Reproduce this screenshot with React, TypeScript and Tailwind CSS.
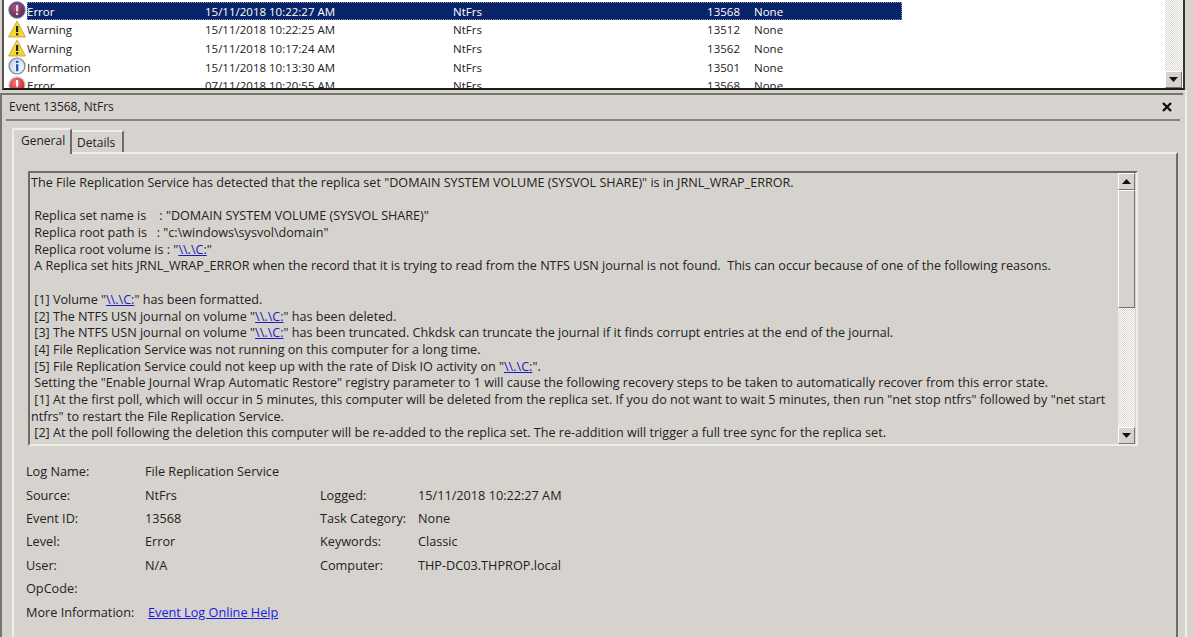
const font = "[font-family:'Open_Sans','Noto_Sans',sans-serif]";

function ErrorIcon({ selected, id }: { selected?: boolean; id: string }) {
  return (
    <svg width="18" height="18" viewBox="0 0 18 18" className="shrink-0">
      <defs>
        <radialGradient id={id} cx="0.4" cy="0.35" r="0.75">
          <stop offset="0" stopColor={selected ? "#a0587c" : "#f37a78"} />
          <stop offset="1" stopColor={selected ? "#621f4d" : "#c4161c"} />
        </radialGradient>
      </defs>
      <circle cx="9" cy="9" r="8" fill={`url(#${id})`} stroke={selected ? "#5c6c9c" : "#c9c9c9"} strokeWidth="1.3" />
      <rect x="8" y="4" width="2.2" height="6.5" fill={selected ? "#e6d6e0" : "#fff"} />
      <rect x="8" y="11.8" width="2.2" height="2.2" fill={selected ? "#e6d6e0" : "#fff"} />
    </svg>
  );
}

function WarnIcon() {
  return (
    <svg width="18" height="18" viewBox="0 0 18 18" className="shrink-0">
      <path d="M9 1 L17.5 17 L0.5 17 Z" fill="#f6d535" stroke="#bfa02c" strokeWidth="0.8" strokeLinejoin="round" />
      <rect x="8" y="6" width="2.2" height="6" fill="#222" />
      <rect x="8" y="13.2" width="2.2" height="2.2" fill="#222" />
    </svg>
  );
}

function InfoIcon() {
  return (
    <svg width="18" height="18" viewBox="0 0 18 18" className="shrink-0">
      <defs>
        <radialGradient id="info-fill" cx="0.6" cy="0.6" r="0.7">
          <stop offset="0" stopColor="#ffffff" />
          <stop offset="1" stopColor="#b9c9ea" />
        </radialGradient>
      </defs>
      <circle cx="9" cy="9" r="8" fill="url(#info-fill)" stroke="#73829f" strokeWidth="1.2" />
      <rect x="8" y="3.8" width="2.4" height="2.2" fill="#2a55b5" />
      <rect x="8" y="7.2" width="2.4" height="7" fill="#2a55b5" />
    </svg>
  );
}

function Arrow({ up }: { up?: boolean }) {
  return (
    <svg width="9" height="5" viewBox="0 0 9 5">
      <path d={up ? "M4.5 0 L9 5 L0 5 Z" : "M0 0 L9 0 L4.5 5 Z"} fill="#111" />
    </svg>
  );
}

function ScrollButton({ up }: { up?: boolean }) {
  return (
    <div className="flex h-[17px] w-[17px] shrink-0 items-center justify-center border-t border-l border-t-white border-l-white border-r border-b border-r-[#77746e] border-b-[#77746e] bg-[#d6d3ce]">
      <Arrow up={up} />
    </div>
  );
}

const dither = "bg-[repeating-conic-gradient(#ffffff_0_25%,#d9d6d0_0_50%)] bg-[length:2px_2px]";

const rows = [
  { icon: <ErrorIcon selected id="err-a" />, level: "Error", date: "15/11/2018 10:22:27 AM", id: "13568", selected: true },
  { icon: <WarnIcon />, level: "Warning", date: "15/11/2018 10:22:25 AM", id: "13512" },
  { icon: <WarnIcon />, level: "Warning", date: "15/11/2018 10:17:24 AM", id: "13562" },
  { icon: <InfoIcon />, level: "Information", date: "15/11/2018 10:13:30 AM", id: "13501" },
  { icon: <ErrorIcon id="err-b" />, level: "Error", date: "07/11/2018 10:20:55 AM", id: "13568" },
];

function EventList() {
  return (
    <div className="ml-[2px] mr-[8px] flex h-[90px] shrink-0 overflow-hidden border-x-2 border-b-2 border-l-[#55534f] border-r-[#333] border-b-[#1c1c1c] bg-white">
      <div className="flex-1 overflow-hidden pt-[2px]">
        {rows.map((r, i) => (
          <div key={i} className="flex h-[18.7px] items-center pl-[4px]">
            <span className="relative top-[-1px]">{r.icon}</span>
            <div
              className={`ml-[1px] flex h-[18px] w-[875px] items-center ${
                r.selected ? "bg-[#0a246a] text-white outline-1 outline-dotted outline-offset-[-1px] outline-[#8f9bbd]" : "text-[#222]"
              }`}
            >
              <span className="w-[178px]">{r.level}</span>
              <span className="w-[248px]">{r.date}</span>
              <span className="w-[248px]">NtFrs</span>
              <span className="w-[39px] text-right">{r.id}</span>
              <span className="ml-[14px]">None</span>
            </div>
          </div>
        ))}
      </div>
      <div className="flex w-[18px] shrink-0 flex-col">
        <div className={`flex-1 ${dither}`} />
        <ScrollButton />
      </div>
    </div>
  );
}

function Link({ children }: { children: string }) {
  return <span className="text-[#1a1ab8] underline">{children}</span>;
}

const C = <Link>{"\\\\.\\C:"}</Link>;

function Message() {
  const lines: React.ReactNode[] = [
    'The File Replication Service has detected that the replica set "DOMAIN SYSTEM VOLUME (SYSVOL SHARE)" is in JRNL_WRAP_ERROR.',
    "",
    ' Replica set name is    : "DOMAIN SYSTEM VOLUME (SYSVOL SHARE)"',
    ' Replica root path is   : "c:\\windows\\sysvol\\domain"',
    <> Replica root volume is : "{C}"</>,
    " A Replica set hits JRNL_WRAP_ERROR when the record that it is trying to read from the NTFS USN journal is not found.  This can occur because of one of the following reasons.",
    "",
    <> [1] Volume "{C}" has been formatted.</>,
    <> [2] The NTFS USN journal on volume "{C}" has been deleted.</>,
    <> [3] The NTFS USN journal on volume "{C}" has been truncated. Chkdsk can truncate the journal if it finds corrupt entries at the end of the journal.</>,
    " [4] File Replication Service was not running on this computer for a long time.",
    <> [5] File Replication Service could not keep up with the rate of Disk IO activity on "{C}".</>,
    ' Setting the "Enable Journal Wrap Automatic Restore" registry parameter to 1 will cause the following recovery steps to be taken to automatically recover from this error state.',
    ' [1] At the first poll, which will occur in 5 minutes, this computer will be deleted from the replica set. If you do not want to wait 5 minutes, then run "net stop ntfrs" followed by "net start',
    'ntfrs" to restart the File Replication Service.',
    " [2] At the poll following the deletion this computer will be re-added to the replica set. The re-addition will trigger a full tree sync for the replica set.",
  ];
  return (
    <div className="ml-[14px] flex h-[275px] w-[1110px] border-y-2 border-x-2 border-t-[#6e6c68] border-l-[#6e6c68] border-r-[#efedea] border-b-[#efedea]">
      <div className="flex-1 overflow-hidden pl-[1px] pt-[2px] text-[12.6px] text-[#222]">
        {lines.map((line, i) => (
          <div key={i} className="h-[16.7px] whitespace-pre leading-[16.7px]">
            {line}
          </div>
        ))}
      </div>
      <div className="mr-[1px] flex w-[17px] shrink-0 flex-col">
        <ScrollButton up />
        <div className="h-[118px] shrink-0 border-y border-x border-t-white border-l-white border-r-[#77746e] border-b-[#77746e] bg-[#d6d3ce]" />
        <div className={`flex-1 ${dither}`} />
        <ScrollButton />
      </div>
    </div>
  );
}

function Details() {
  return (
    <div className="ml-[12px] mt-[14px] grid auto-rows-[23.4px] grid-cols-[119px_175px_98px_1fr] items-center text-[12.7px] text-[#222]">
      <span>Log Name:</span>
      <span className="col-span-3">File Replication Service</span>
      <span>Source:</span>
      <span>NtFrs</span>
      <span>Logged:</span>
      <span>15/11/2018 10:22:27 AM</span>
      <span>Event ID:</span>
      <span>13568</span>
      <span>Task Category:</span>
      <span>None</span>
      <span>Level:</span>
      <span>Error</span>
      <span>Keywords:</span>
      <span>Classic</span>
      <span>User:</span>
      <span>N/A</span>
      <span>Computer:</span>
      <span>THP-DC03.THPROP.local</span>
      <span className="col-span-4">OpCode:</span>
      <span className="col-span-4 flex">
        <span className="w-[122px]">More Information:</span>
        <span className="text-[#1a1ae0] underline">Event Log Online Help</span>
      </span>
    </div>
  );
}

export default function App() {
  return (
    <div className={`flex h-[637px] w-[1193px] flex-col overflow-hidden bg-[#d6d3ce] text-[11.5px] ${font}`}>
      <EventList />
      <div className="mr-[6px] flex min-h-0 flex-1 flex-col border-r-2 border-r-[#efedea] pt-[3px]">
        <div className="mr-[2px] flex-1 border-t-2 border-l-2 border-t-[#77746e] border-l-[#77746e]">
          <div className="ml-[4px] mr-[3px] flex h-[26px] items-center justify-between border-b-2 border-b-[#86837e] pl-[3px] pr-[8px] text-[12px] text-[#222]">
            <span>Event 13568, NtFrs</span>
            <svg width="10" height="10" viewBox="0 0 10 10">
              <path d="M1 1 L9 9 M9 1 L1 9" stroke="#111" strokeWidth="2.4" />
            </svg>
          </div>
          <div className="mt-[7px] flex items-end pl-[10px] text-[12px]">
            <div className="z-10 -mb-[2px] h-[26px] w-[60px] rounded-t-[2px] border-t-2 border-l-2 border-r-2 border-t-[#efedea] border-l-[#efedea] border-r-[#6e6c68] bg-[#d6d3ce] pl-[7px] pt-[2px] text-[#222]">
              General
            </div>
            <div className="h-[22px] w-[52px] rounded-t-[2px] border-t-2 border-r-2 border-t-[#efedea] border-r-[#6e6c68] pl-[5px] pt-[2px] text-[#222]">
              Details
            </div>
          </div>
          <div className="ml-[10px] mr-[5px] h-[500px] border-t-2 border-l-2 border-r-2 border-t-[#efedea] border-l-[#efedea] border-r-[#6e6c68] pt-[17px]">
            <Message />
            <Details />
          </div>
        </div>
      </div>
    </div>
  );
}
